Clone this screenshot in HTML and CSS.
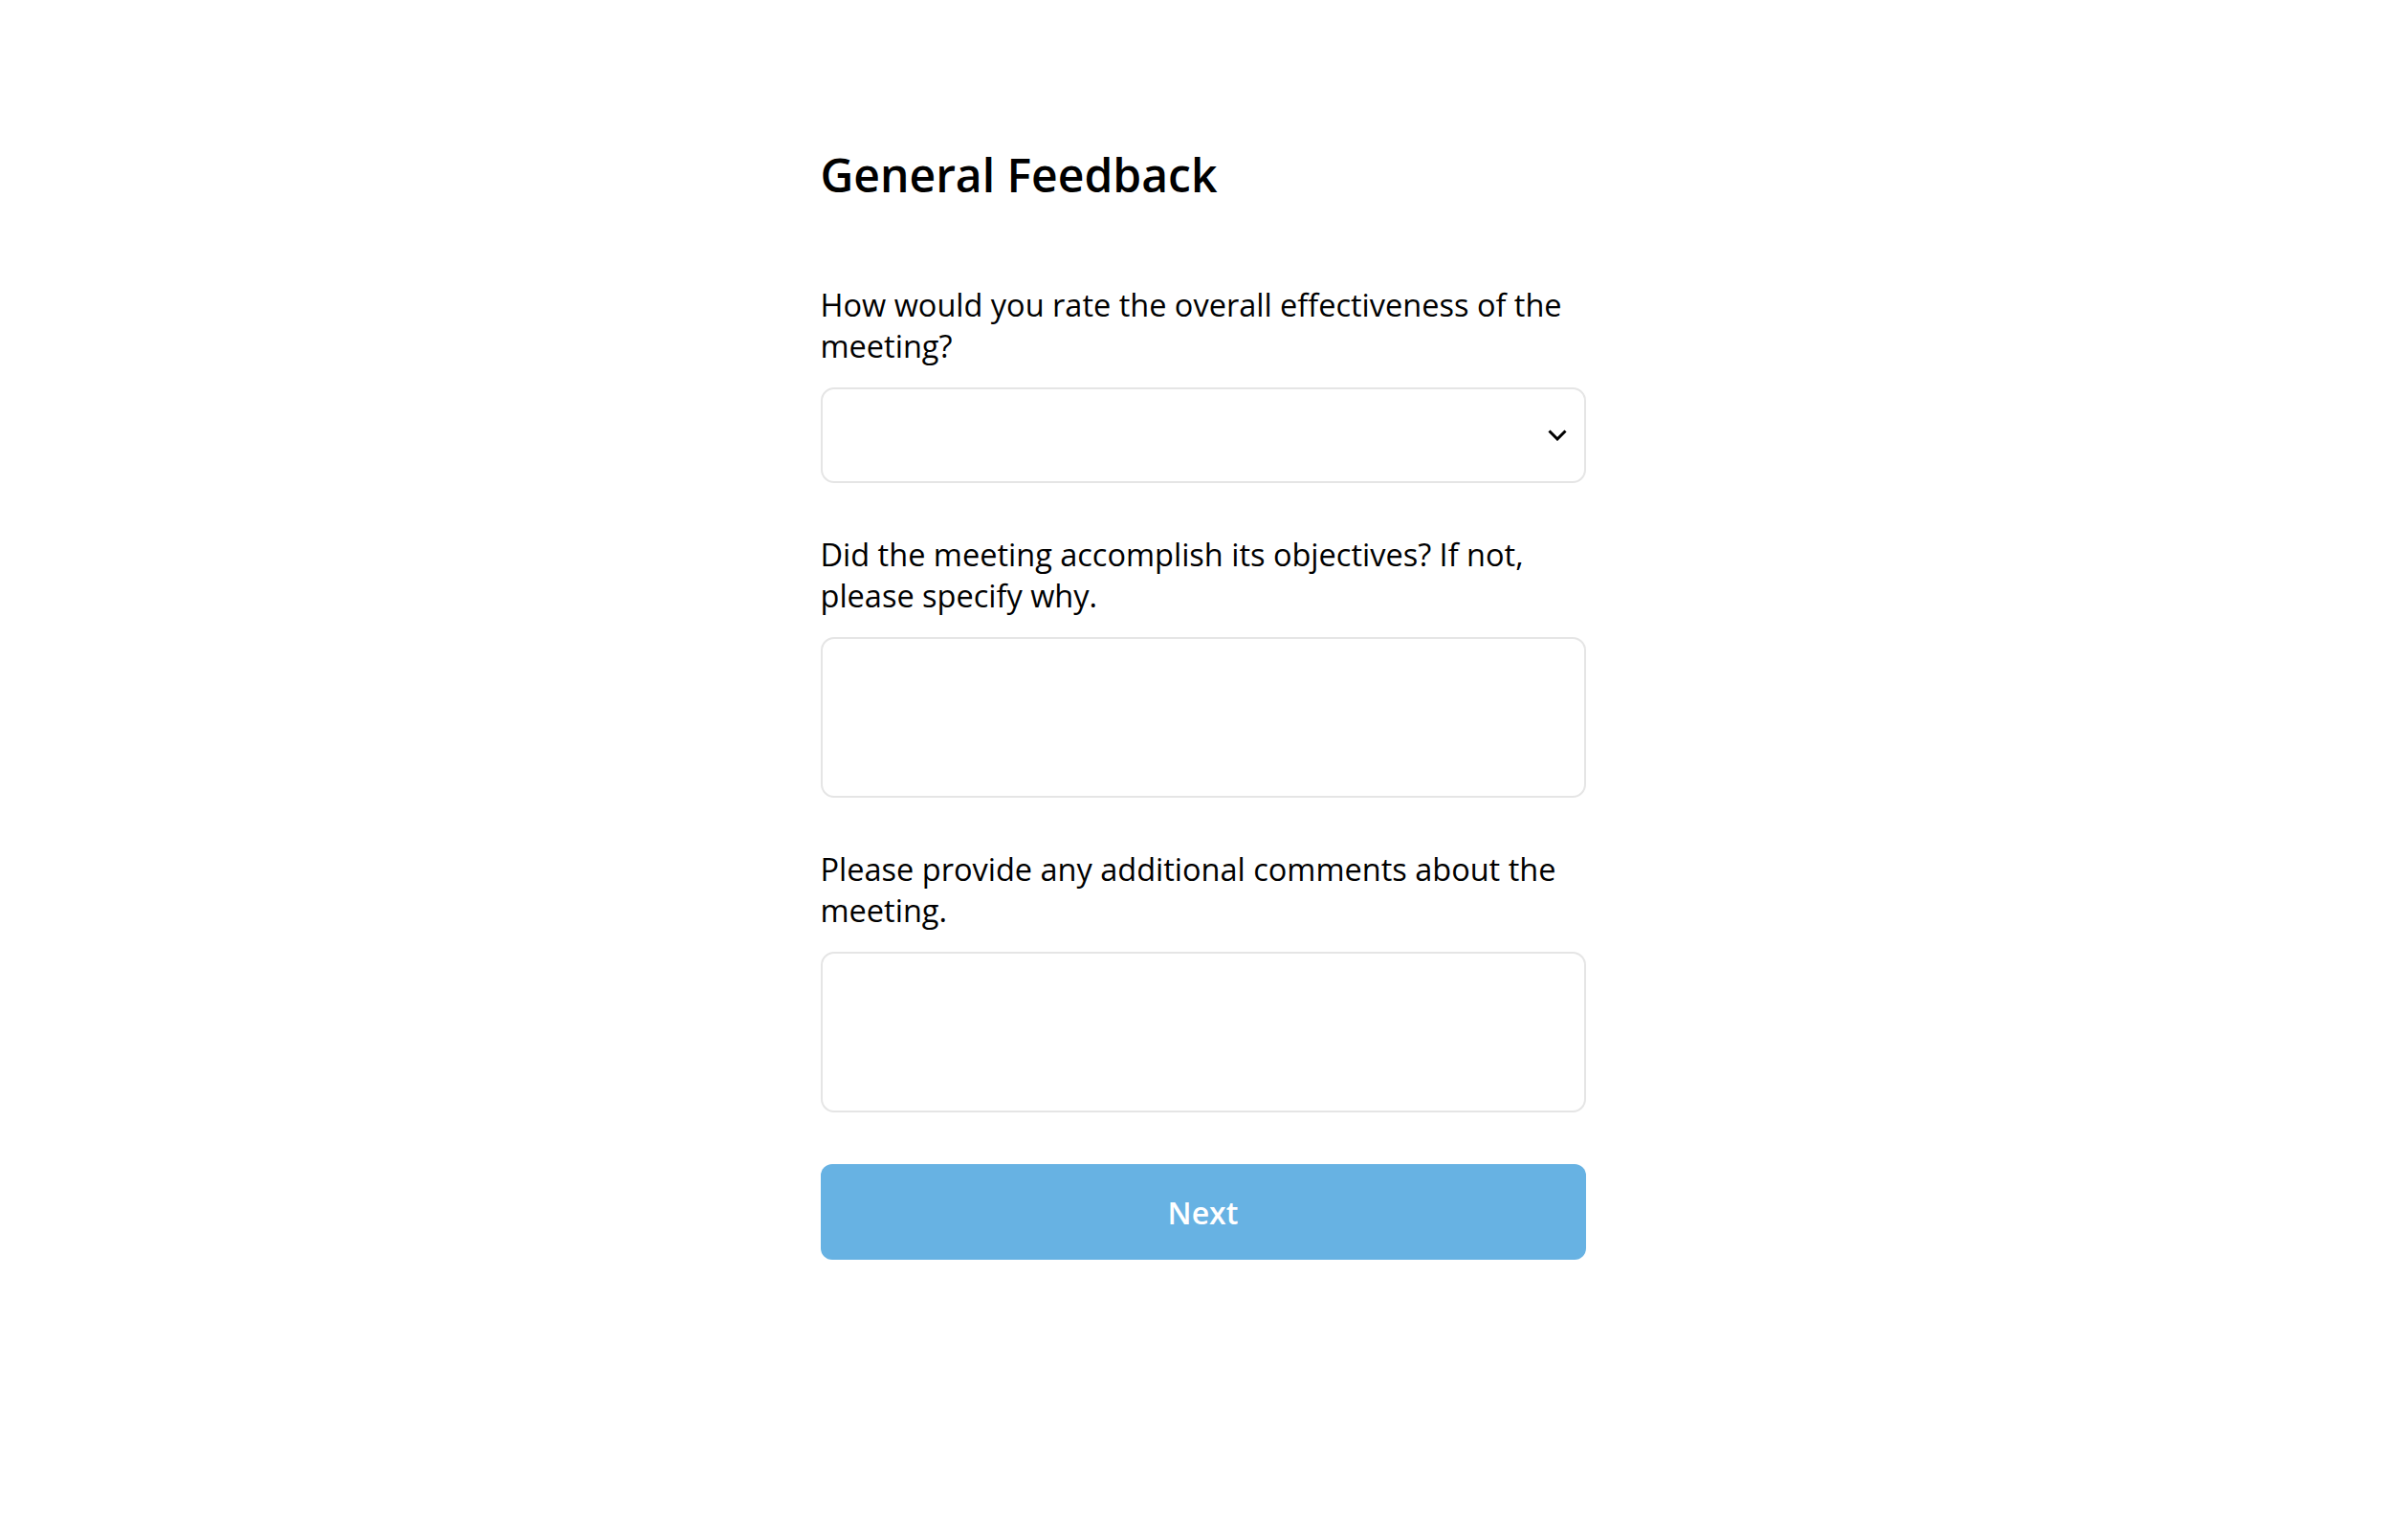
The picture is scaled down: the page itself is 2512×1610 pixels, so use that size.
FILE: index.html
```html
<!DOCTYPE html>
<html lang="en">
<head>
    <meta charset="UTF-8">
    <meta name="viewport" content="width=device-width, initial-scale=1.0">
    <title>General Feedback</title>
    <link rel="stylesheet" href="styles.css">
</head>
<body>
    <div class="container">
        <h1>General Feedback</h1>

        <form id="generalFeedback">
            <div class="field">
                <label for="effectiveness">How would you rate the overall effectiveness of the meeting?</label>
                <div class="select-wrap">
                    <select id="effectiveness" name="effectiveness">
                        <option value=""></option>
                        <option value="5">Very effective</option>
                        <option value="4">Effective</option>
                        <option value="3">Neutral</option>
                        <option value="2">Ineffective</option>
                        <option value="1">Very ineffective</option>
                    </select>
                    <!-- chevron for the dropdown -->
                    <svg class="chevron" width="20" height="12" viewBox="0 0 20 12">
                        <path d="M1.5 1.5 L10 10 L18.5 1.5" fill="none" stroke="#000" stroke-width="3"/>
                    </svg>
                </div>
            </div>

            <div class="field">
                <label for="objectives">Did the meeting accomplish its objectives? If not, please specify why.</label>
                <textarea id="objectives" name="objectives"></textarea>
            </div>

            <div class="field last">
                <label for="comments">Please provide any additional comments about the meeting.</label>
                <textarea id="comments" name="comments"></textarea>
            </div>

            <button type="submit" class="next-btn">Next</button>
        </form>
    </div>
</body>
</html>
```

FILE: styles.css
```css
body {
    font-family: "Open Sans", sans-serif;
    background-color: #fff;
    color: #000;
    margin: 0;
    padding: 0 0 0 3px;
}

.container {
    width: 800px;
    margin: 0 auto;
    padding-top: 150px;
}

h1 {
    font-size: 48px;
    font-weight: 600;
    line-height: 65px;
    margin: 0 0 82px;
}

.field {
    margin-bottom: 53px;
}

.field.last {
    margin-bottom: 54px;
}

label {
    display: block;
    font-size: 32.5px;
    line-height: 43px;
    margin-bottom: 22px;
}

.select-wrap {
    position: relative;
}

select,
textarea {
    display: block;
    width: 100%;
    box-sizing: border-box;
    border: 2px solid #e5e5e5;
    border-radius: 14px;
    background-color: #fff;
    font-family: inherit;
    font-size: 32px;
    color: #000;
    outline: none;
}

select {
    height: 100px;
    padding: 0 60px 0 24px;
    appearance: none;
    -webkit-appearance: none;
}

.chevron {
    position: absolute;
    right: 20px;
    top: 44px;
    pointer-events: none;
}

textarea {
    height: 168px;
    padding: 20px 24px;
    resize: none;
}

.next-btn {
    display: block;
    width: 100%;
    height: 100px;
    border: none;
    border-radius: 12px;
    background-color: #67b2e3;
    color: #fff;
    font-family: inherit;
    font-size: 32px;
    font-weight: 600;
    cursor: pointer;
}

.next-btn:hover {
    background-color: #5aa7da;
}
```
